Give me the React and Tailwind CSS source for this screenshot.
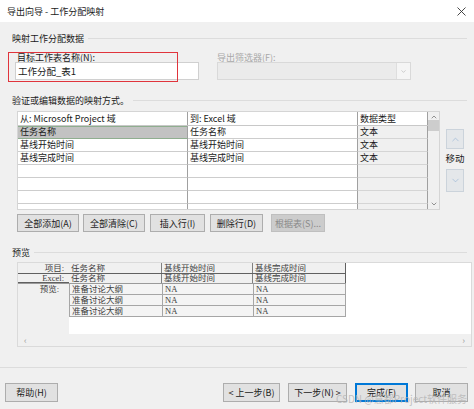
import { ChevronUp, ChevronDown } from 'lucide-react'

const mapRows = [
  { from: '任务名称', to: '任务名称', type: '文本', selected: true },
  { from: '基线开始时间', to: '基线开始时间', type: '文本' },
  { from: '基线完成时间', to: '基线完成时间', type: '文本' },
  { from: '', to: '', type: '' },
  { from: '', to: '', type: '' },
  { from: '', to: '', type: '' },
  { from: '', to: '', type: '' },
]

const previewRows = ['准备讨论大纲', '准备讨论大纲', '准备讨论大纲']

function SectionTitle({ children }) {
  return (
    <div className="flex items-center h-[10px] gap-[4px]">
      <span className="leading-none whitespace-nowrap">{children}</span>
      <div className="flex-1 h-px bg-[#dcdcdc]" />
    </div>
  )
}

function Btn({ children, className = '', disabled, primary }) {
  return (
    <div
      className={`flex items-center justify-center h-[18px] border leading-none ${
        disabled
          ? 'bg-[#cccccc] border-[#bfbfbf] text-[#8a8a8a]'
          : primary
          ? 'bg-[#e1e1e1] border-[#0078d7] shadow-[inset_0_0_0_1px_#0078d7]'
          : 'bg-[#e1e1e1] border-[#adadad]'
      } ${className}`}
    >
      {children}
    </div>
  )
}

function MappingGrid() {
  return (
    <div className="flex h-[99px] border border-[#d5d5d5] bg-white overflow-hidden">
      <div className="flex flex-col w-[410px]">
        <div className="flex h-[14px] border-b border-[#c8c8c8] shrink-0">
          <div className="w-[170px] pl-[2px] flex items-center border-r border-[#a0a0a0]">从: Microsoft Project 域</div>
          <div className="w-[170px] pl-[2px] flex items-center border-r border-[#a0a0a0]">到: Excel 域</div>
          <div className="w-[70px] pl-[2px] flex items-center border-r border-[#a0a0a0]">数据类型</div>
        </div>
        {mapRows.map((r, i) => (
          <div key={i} className="flex h-[13px] shrink-0">
            <div
              className={`w-[170px] pl-[2px] flex items-center border-r border-[#a0a0a0] border-b ${
                r.selected ? 'bg-[#c2c2c2] border-b-[#8fae8f] shadow-[inset_0_1px_0_#8fae8f]' : 'border-b-[#cdcdcd]'
              }`}
            >
              {r.from}
            </div>
            <div className="w-[170px] pl-[2px] flex items-center border-r border-[#a0a0a0] border-b border-b-[#cdcdcd]">{r.to}</div>
            <div className="w-[70px] pl-[2px] flex items-center border-r border-[#a0a0a0] border-b border-b-[#d5d5d5] bg-[#f0f0f0]">{r.type}</div>
          </div>
        ))}
      </div>
      <div className="w-[13px] bg-[#f0f0f0] flex flex-col items-center justify-between py-[1px]">
        <ChevronUp size={8} strokeWidth={2} className="text-[#606060]" />
        <div className="w-[11px] h-[11px] bg-[#cdcdcd] -mt-[70px]" />
        <ChevronDown size={8} strokeWidth={2} className="text-[#606060]" />
      </div>
    </div>
  )
}

function PreviewTable() {
  const cell = 'flex items-center pl-[2px] border-r'
  return (
    <div className="flex flex-col h-[85px] border border-[#dadada] bg-white font-['Liberation_Serif','Noto_Sans_CJK_SC',serif] text-[8.5px] text-[#404040]">
      <div className="flex flex-col flex-1">
        <div className="flex h-[10px] w-[328px] bg-[#f0f0f0]">
          <div className="w-[51px] flex items-center justify-end pr-[5px]">项目:</div>
          <div className={`w-[93px] ${cell} border-[#808080]`}>任务名称</div>
          <div className={`w-[91px] ${cell} border-[#808080]`}>基线开始时间</div>
          <div className={`w-[93px] ${cell} border-[#606060]`}>基线完成时间</div>
        </div>
        <div className="flex h-[11px] w-[328px] bg-[#f0f0f0] border-t border-b border-t-[#606060] border-b-[#9a9a9a]">
          <div className="w-[51px] flex items-center justify-end pr-[5px] border-b border-[#606060]">Excel:</div>
          <div className={`w-[93px] ${cell} border-[#808080]`}>任务名称</div>
          <div className={`w-[91px] ${cell} border-[#808080]`}>基线开始时间</div>
          <div className={`w-[93px] ${cell} border-[#606060]`}>基线完成时间</div>
        </div>
        <div className="flex flex-1">
          <div className="w-[51px] bg-[#f0f0f0] flex justify-end pr-[10px] pt-[1px] leading-none">预览:</div>
          <div className="flex flex-col">
            {previewRows.map((t, i) => (
              <div key={i} className="flex h-[11px] border-b border-l border-[#a6a6a6] bg-[#f4f4f4]">
                <div className={`w-[93px] ${cell} border-[#a6a6a6]`}>{t}</div>
                <div className={`w-[91px] ${cell} border-[#a6a6a6]`}>NA</div>
                <div className={`w-[92px] ${cell} border-[#a6a6a6]`}>NA</div>
              </div>
            ))}
          </div>
        </div>
      </div>
      <div className="h-[12px] bg-[#f0f0f0] flex items-center justify-between px-[6px] text-[#a0a0a0] font-['Noto_Sans_CJK_SC',sans-serif] text-[9px] leading-none">
        <span>‹</span>
        <span>›</span>
      </div>
    </div>
  )
}

export default function App() {
  return (
    <div className="relative w-[474px] h-[409px] bg-[#f0f0f0] flex flex-col overflow-hidden font-['Noto_Sans_CJK_SC',sans-serif] text-[9px] text-[#1a1a1a]">
      <div className="h-[22px] bg-white flex items-center justify-between pl-[7px] pr-[8px] shrink-0">
        <span className="leading-none">导出向导 - 工作分配映射</span>
        <svg width="9" height="9" viewBox="0 0 9 9" className="text-[#333]">
          <path d="M0.5 0.5 L8.5 8.5 M8.5 0.5 L0.5 8.5" stroke="currentColor" strokeWidth="0.9" />
        </svg>
      </div>

      <div className="flex flex-col pl-[12px] pr-[7px] pt-[11px]">
        <SectionTitle>映射工作分配数据</SectionTitle>

        <div className="relative flex mt-[9px] gap-[18px] pl-[3px]">
          <div className="flex flex-col w-[184px]">
            <div className="h-[10px] leading-none pl-[2px] flex items-center">目标工作表名称(N):</div>
            <div className="h-[18px] bg-white border border-[#d0d0d0] flex items-center pl-[2px] text-[9.5px]">工作分配_表1</div>
          </div>
          <div className="flex flex-col w-[194px] text-[#a8a8a8]">
            <div className="h-[10px] leading-none flex items-center">导出筛选器(F):</div>
            <div className="h-[18px] bg-[#ebebeb] border border-[#d9d9d9] flex justify-end">
              <div className="w-[14px] bg-[#f5f5f5] border-l border-[#dedede] flex items-center justify-center">
                <ChevronDown size={7} strokeWidth={1.5} className="text-[#9a9a9a]" />
              </div>
            </div>
          </div>
          <div className="absolute left-[-4px] top-0 w-[170px] h-[30px] border-[1.5px] border-[#e0343c]" />
        </div>

        <div className="mt-[15px]">
          <SectionTitle>验证或编辑数据的映射方式。</SectionTitle>
        </div>

        <div className="flex mt-[6px] pl-[5px] gap-[6px]">
          <div className="w-[423px]">
            <MappingGrid />
          </div>
          <div className="flex flex-col items-center w-[18px] pt-[18px]">
            <div className="w-[18px] h-[20px] bg-[#e4e7ea] border border-[#cbd3db] flex items-center justify-center">
              <ChevronUp size={11} strokeWidth={1.3} className="text-[#8fb0d3]" />
            </div>
            <div className="h-[20px] flex items-center leading-none text-[9.5px] whitespace-nowrap">移动</div>
            <div className="w-[18px] h-[23px] bg-[#e4e7ea] border border-[#cbd3db] flex items-center justify-center">
              <ChevronDown size={11} strokeWidth={1.3} className="text-[#8fb0d3]" />
            </div>
          </div>
        </div>

        <div className="flex mt-[4px] pl-[5px] gap-[4px]">
          <Btn className="w-[62px]">全部添加(A)</Btn>
          <Btn className="w-[62px]">全部清除(C)</Btn>
          <Btn className="w-[55px] ml-[1px]">插入行(I)</Btn>
          <Btn className="w-[53px] ml-[1px]">删除行(D)</Btn>
          <Btn className="w-[54px] ml-[4px]" disabled>根据表(S)...</Btn>
        </div>

        <div className="mt-[15px]">
          <SectionTitle>预览</SectionTitle>
        </div>

        <div className="mt-[5px] pl-[5px] w-[460px]">
          <PreviewTable />
        </div>
      </div>

      <div className="mt-[20px] h-px bg-[#dcdcdc] mr-[7px]" />

      <div className="flex items-center mt-[15px] pl-[5px] pr-[6px]">
        <Btn className="w-[53px] h-[19px]">帮助(H)</Btn>
        <div className="flex-1" />
        <Btn className="w-[57px] h-[19px]">&lt; 上一步(B)</Btn>
        <Btn className="w-[59px] h-[19px] ml-[8px]">下一步(N) &gt;</Btn>
        <Btn className="w-[53px] h-[19px] ml-[8px]" primary>完成(F)</Btn>
        <Btn className="w-[53px] h-[19px] ml-[7px]">取消</Btn>
      </div>

      <div className="absolute right-[7px] bottom-[5px] text-[10px] leading-none text-[#b4b4b4]/80 whitespace-nowrap pointer-events-none">
        CSDN @慧都Project软件服务
      </div>
    </div>
  )
}
